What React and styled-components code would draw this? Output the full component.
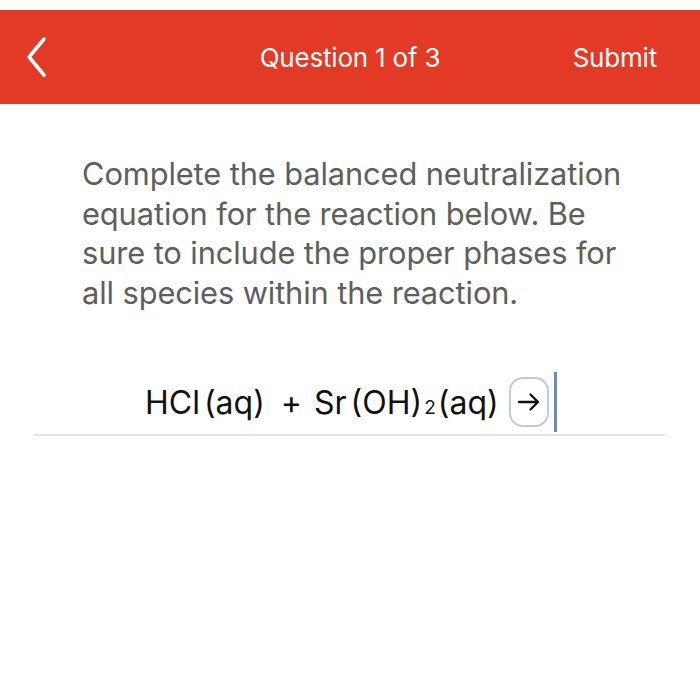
import styled, { createGlobalStyle } from "styled-components"

const Global = createGlobalStyle`
    body{
        margin: 0;
        background: #ffffff;
        font-family: "Inter", "Liberation Sans", sans-serif;
    }
`

export default function App(){
    return(
        <>
            <Global/>
            <Tela>
                <Topo>
                    <Voltar aria-label="back">
                        <svg width="22" height="42" viewBox="0 0 22 42">
                            <path d="M18 3 L3 21 L18 39" fill="none" stroke="#ffffff" strokeWidth="3.6" strokeLinecap="round" strokeLinejoin="round"/>
                        </svg>
                    </Voltar>
                    <Titulo>Question 1 of 3</Titulo>
                    <Enviar>Submit</Enviar>
                </Topo>
                <Pergunta>
                    Complete the balanced neutralization equation for the reaction below. Be sure to include the proper phases for all species within the reaction.
                </Pergunta>
                <Equacao>
                    <Formula>
                        <span>HCl</span>
                        <span className="fase">(aq)</span>
                        <span className="mais">+</span>
                        <span>Sr</span>
                        <span className="fase">(OH)</span>
                        <sub>2</sub>
                        <span>(aq)</span>
                    </Formula>
                    <Seta>
                        <svg width="24" height="20" viewBox="0 0 24 20">
                            <path d="M2 10 H21 M13.5 2.5 L21 10 L13.5 17.5" fill="none" stroke="#111111" strokeWidth="2.3" strokeLinecap="round" strokeLinejoin="round"/>
                        </svg>
                    </Seta>
                    <Cursor/>
                </Equacao>
            </Tela>
        </>
    )
}

const Tela = styled.div`
    width: 700px;
    height: 683px;
    padding-top: 10px;
    box-sizing: border-box;
`
const Topo = styled.header`
    height: 94px;
    background: #e33a25;
    display: grid;
    grid-template-columns: 1fr auto 1fr;
    align-items: center;
    padding: 0 43px 0 26px;
    color: #ffffff;
    font-size: 26px;
    letter-spacing: -0.2px;
`
const Voltar = styled.div`
    width: 22px;
    height: 42px;
    display: flex;
`
const Titulo = styled.div`
    text-align: center;
    margin-left: 17px;
`
const Enviar = styled.div`
    justify-self: end;
`
const Pergunta = styled.p`
    margin: 50px 0 0 82px;
    max-width: 550px;
    font-size: 30.8px;
    line-height: 39.5px;
    color: #5e5e5e;
    letter-spacing: -0.1px;
`
const Equacao = styled.div`
    margin: 58px 35px 0 34px;
    height: 64px;
    border-bottom: 2px solid #e3e3e3;
    display: flex;
    align-items: center;
    padding-left: 111px;
`
const Formula = styled.div`
    font-size: 32px;
    color: #111111;
    display: flex;
    align-items: baseline;
    .fase{
        margin-left: 4px;
    }
    .mais{
        margin: 0 12px 0 16px;
    }
    sub{
        font-size: 19px;
        margin: 0 2px;
    }
`
const Seta = styled.div`
    margin-left: 10px;
    width: 40px;
    height: 50px;
    box-sizing: border-box;
    border: 2px solid #c9c9c9;
    border-radius: 14px;
    display: flex;
    align-items: center;
    justify-content: center;
`
const Cursor = styled.div`
    width: 3px;
    height: 60px;
    margin-left: 5px;
    background: #6f8db0;
`
